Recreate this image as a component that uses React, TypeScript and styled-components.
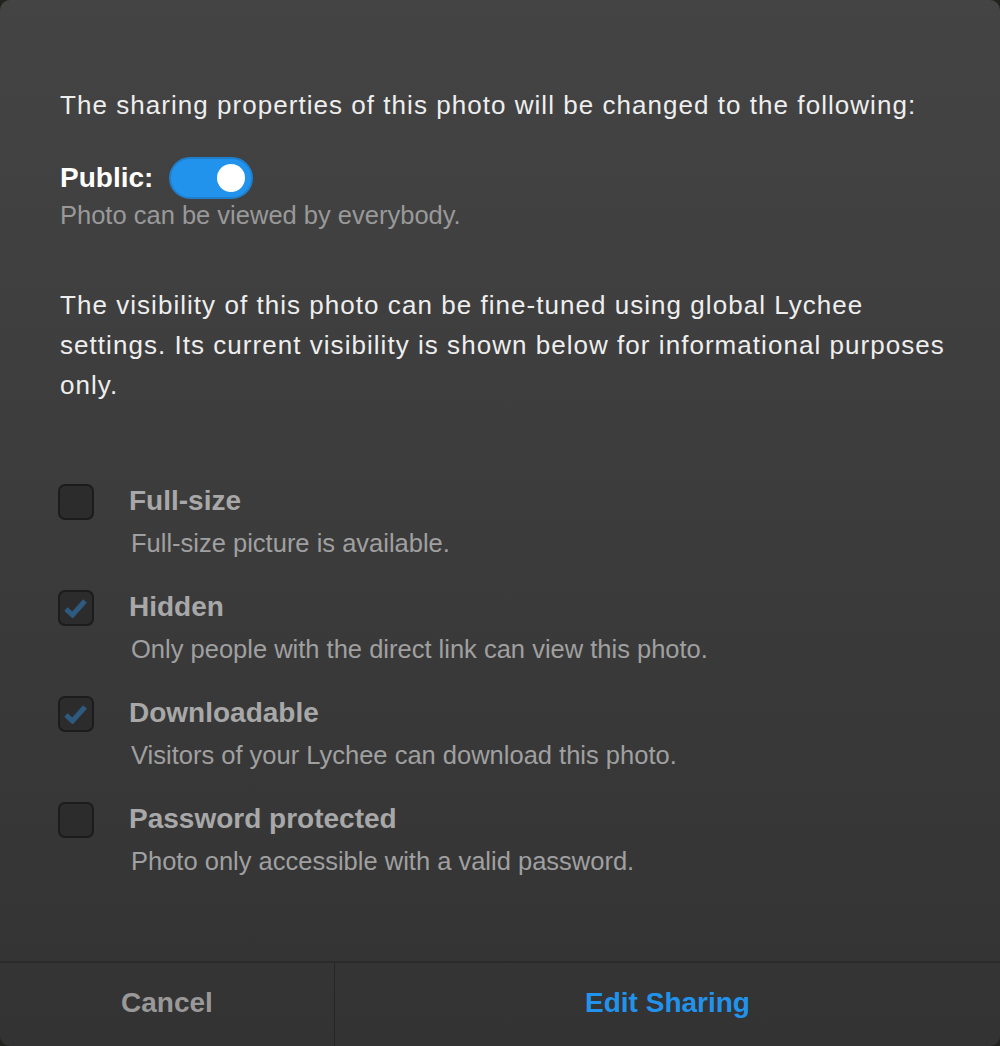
import React, { useState } from "react";
import styled, { createGlobalStyle } from "styled-components";

const GlobalStyle = createGlobalStyle`
  html, body {
    margin: 0;
    padding: 0;
    background: #22221e;
  }
  * {
    box-sizing: border-box;
  }
`;

const Dialog = styled.div`
  width: 1000px;
  height: 1046px;
  display: flex;
  flex-direction: column;
  border-radius: 10px;
  overflow: hidden;
  background: linear-gradient(to bottom, #444 0%, #333 100%);
  font-family: "Liberation Sans", Arial, sans-serif;
`;

const Content = styled.div`
  flex: 1;
  padding: 85px 52px 0 60px;
`;

const Text = styled.p`
  margin: 0;
  font-size: 26px;
  letter-spacing: 1.04px;
  line-height: 40px;
  color: #eee;
`;

const SwitchRow = styled.div`
  display: flex;
  align-items: center;
  gap: 16px;
  margin-top: 32px;
  height: 42px;
`;

const SwitchLabel = styled.span`
  font-size: 28px;
  font-weight: bold;
  color: #fff;
`;

const Toggle = styled.button<{ $on: boolean }>`
  width: 84px;
  height: 42px;
  border-radius: 21px;
  border: 2px solid ${(p) => (p.$on ? "#1f7fcc" : "#222")};
  background: ${(p) => (p.$on ? "#2293ec" : "#2b2b2b")};
  display: flex;
  align-items: center;
  justify-content: ${(p) => (p.$on ? "flex-end" : "flex-start")};
  padding: 0 6px;
  cursor: pointer;
  & > span {
    width: 28px;
    height: 28px;
    border-radius: 50%;
    background: #fff;
  }
`;

const Hint = styled.p`
  margin: 0;
  font-size: 25.5px;
  line-height: 32px;
  color: #999;
`;

const Paragraph = styled(Text)`
  margin-top: 54px;
`;

const Options = styled.div`
  margin-top: 76px;
  display: flex;
  flex-direction: column;
  gap: 28px;
`;

const Option = styled.div`
  display: grid;
  grid-template-columns: 36px 1fr;
  column-gap: 35px;
  row-gap: 6px;
  margin-left: -2px;
`;

const Box = styled.div`
  width: 36px;
  height: 36px;
  margin-top: 3px;
  border: 2px solid #1c1c1c;
  border-radius: 7px;
  background: #2c2c2c;
  display: flex;
  align-items: center;
  justify-content: center;
`;

const OptionTitle = styled.div`
  font-size: 28px;
  font-weight: bold;
  line-height: 40px;
  color: #a8a8a8;
`;

const OptionDesc = styled.div`
  grid-column: 2;
  padding-left: 2px;
  font-size: 25.5px;
  line-height: 32px;
  color: #a0a0a0;
`;

const Footer = styled.div`
  height: 85px;
  display: flex;
  border-top: 2px solid #2a2a2a;
`;

const FooterButton = styled.button<{ $primary?: boolean }>`
  flex: ${(p) => (p.$primary ? "1" : "0 0 334px")};
  border: none;
  border-left: ${(p) => (p.$primary ? "1px solid #262626" : "none")};
  background: transparent;
  padding: 0 0 4px;
  font-family: "Liberation Sans", Arial, sans-serif;
  font-size: 28px;
  font-weight: bold;
  color: ${(p) => (p.$primary ? "#2293ec" : "#999")};
  cursor: pointer;
`;

const Check = () => (
  <svg width="24" height="20" viewBox="0 0 24 20">
    <path
      d="M2 11 L8.5 17 L21 3"
      fill="none"
      stroke="#2e5a80"
      strokeWidth="5"
      strokeLinejoin="miter"
    />
  </svg>
);

const options = [
  { title: "Full-size", desc: "Full-size picture is available.", checked: false },
  {
    title: "Hidden",
    desc: "Only people with the direct link can view this photo.",
    checked: true,
  },
  {
    title: "Downloadable",
    desc: "Visitors of your Lychee can download this photo.",
    checked: true,
  },
  {
    title: "Password protected",
    desc: "Photo only accessible with a valid password.",
    checked: false,
  },
];

export default function App() {
  const [isPublic, setIsPublic] = useState<boolean>(true);

  return (
    <>
      <GlobalStyle />
      <Dialog>
        <Content>
          <Text>The sharing properties of this photo will be changed to the following:</Text>
          <SwitchRow>
            <SwitchLabel>Public:</SwitchLabel>
            <Toggle $on={isPublic} onClick={() => setIsPublic(!isPublic)}>
              <span />
            </Toggle>
          </SwitchRow>
          <Hint>Photo can be viewed by everybody.</Hint>
          <Paragraph>
            The visibility of this photo can be fine-tuned using global Lychee
            settings. Its current visibility is shown below for informational
            purposes only.
          </Paragraph>
          <Options>
            {options.map((o) => (
              <Option key={o.title}>
                <Box>{o.checked && <Check />}</Box>
                <OptionTitle>{o.title}</OptionTitle>
                <OptionDesc>{o.desc}</OptionDesc>
              </Option>
            ))}
          </Options>
        </Content>
        <Footer>
          <FooterButton>Cancel</FooterButton>
          <FooterButton $primary>Edit Sharing</FooterButton>
        </Footer>
      </Dialog>
    </>
  );
}
